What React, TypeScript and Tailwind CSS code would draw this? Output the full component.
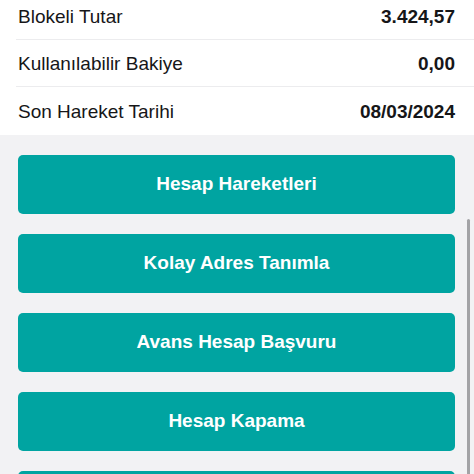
import React from "react";

const rows = [
  { label: "Blokeli Tutar", value: "3.424,57" },
  { label: "Kullanılabilir Bakiye", value: "0,00" },
  { label: "Son Hareket Tarihi", value: "08/03/2024" },
];

const buttons = [
  "Hesap Hareketleri",
  "Kolay Adres Tanımla",
  "Avans Hesap Başvuru",
  "Hesap Kapama",
  "",
];

export default function App() {
  return (
    <div
      className="relative h-[474px] w-[474px] overflow-hidden bg-[#f2f2f4]"
      style={{ fontFamily: '"Liberation Sans", Arial, sans-serif' }}
    >
      <div className="-mt-[7px] bg-white">
        {rows.map((r, i) => (
          <div key={r.label} className="pl-[16px]">
            <div
              className={`flex items-center justify-between pl-[2px] pr-[19px] pt-[3px] ${
                i < rows.length - 1 ? "h-[47px] border-b border-[#ececee]" : "h-[48px]"
              }`}
            >
              <span className="text-[19px] text-[#161618]">{r.label}</span>
              <span className="text-[19px] font-bold text-[#161618]">{r.value}</span>
            </div>
          </div>
        ))}
      </div>
      <div className="flex flex-col gap-[20px] px-[18px] pt-[20px] pr-[19px]">
        {buttons.map((b, i) => (
          <div
            key={i}
            className="flex h-[59px] shrink-0 items-center justify-center rounded-[5px] bg-[#00a4a1] text-[19px] font-bold text-white"
          >
            {b}
          </div>
        ))}
      </div>
      <div className="absolute left-[467px] top-[219px] h-[260px] w-[3px] rounded-full bg-[#a3a3a6]" />
    </div>
  );
}
